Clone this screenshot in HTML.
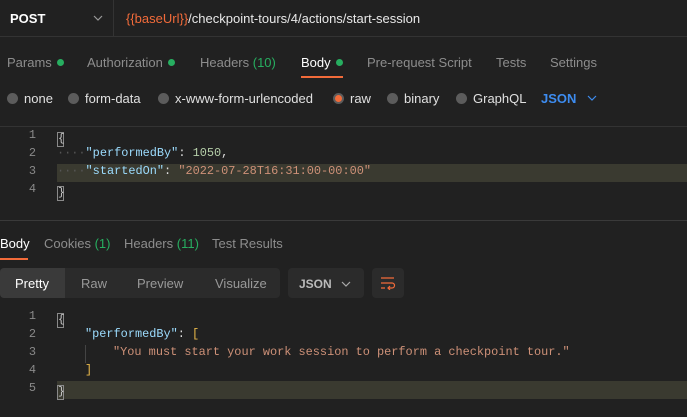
<!DOCTYPE html>
<html><head><style>
*{margin:0;padding:0;box-sizing:border-box}
body{width:687px;height:417px;background:#212121;font-family:"Liberation Sans",sans-serif;font-size:13px;color:#a6a6a6;position:relative;overflow:hidden}
.a{position:absolute;white-space:nowrap}
.dot{display:inline-block;width:7px;height:7px;border-radius:50%;background:#27ae60;margin-left:5px;vertical-align:1px}
.rad{display:inline-block;width:11px;height:11px;border-radius:50%;background:#5c5c5c;vertical-align:-1px;margin-right:6px}
.mono{font-family:"Liberation Mono",monospace;font-size:11.9px}
.ln{color:#8a8a8a;width:36px;text-align:right}
.k{color:#9cdcfe}.s{color:#ce9178}.n{color:#b5cea8}
.br{display:inline-block;width:7px;height:15px;border:1px solid #8a8a8a;vertical-align:-3px;color:#ccc;font-size:11px;line-height:13px}
</style></head><body>
<div class="a" style="left:0;top:0;width:687px;height:37px;border-bottom:1px solid #333"></div>
<div class="a" style="left:0;top:0;width:114px;height:37px;border-right:1px solid #333"></div>
<div class="a" style="left:10px;top:11px;color:#fff;font-weight:bold;font-size:13px">POST</div>
<svg class="a" style="left:93px;top:15px" width="10" height="7"><path d="M1 1l4 4 4-4" stroke="#999" fill="none" stroke-width="1.2"/></svg>
<div class="a" style="left:126px;top:11px;color:#e8e8e8;font-size:13px"><span style="color:#f26b3a">{{baseUrl}}</span>/checkpoint-tours/4/actions/start-session</div>

<div class="a" style="left:7px;top:55px;color:#8d8d8d">Params<span class="dot"></span></div>
<div class="a" style="left:87px;top:55px;color:#8d8d8d">Authorization<span class="dot"></span></div>
<div class="a" style="left:200px;top:55px;color:#8d8d8d">Headers <span style="color:#27ae60">(10)</span></div>
<div class="a" style="left:301px;top:55px;color:#fff">Body<span class="dot"></span></div>
<div class="a" style="left:301px;top:76px;width:42px;height:2px;background:#f26b3a"></div>
<div class="a" style="left:367px;top:55px;color:#8d8d8d">Pre-request Script</div>
<div class="a" style="left:496px;top:55px;color:#8d8d8d">Tests</div>
<div class="a" style="left:550px;top:55px;color:#8d8d8d">Settings</div>

<div class="a" style="left:7px;top:91px;color:#e0e0e0"><span class="rad"></span>none</div>
<div class="a" style="left:68px;top:91px;color:#e0e0e0"><span class="rad"></span>form-data</div>
<div class="a" style="left:158px;top:91px;color:#e0e0e0"><span class="rad"></span>x-www-form-urlencoded</div>
<div class="a" style="left:333px;top:91px;color:#e0e0e0"><span class="rad" style="background:#f26b3a;border:2px solid #5c5c5c"></span>raw</div>
<div class="a" style="left:387px;top:91px;color:#e0e0e0"><span class="rad"></span>binary</div>
<div class="a" style="left:456px;top:91px;color:#e0e0e0"><span class="rad"></span>GraphQL</div>
<div class="a" style="left:541px;top:91px;color:#3d8cf0;font-weight:bold">JSON</div>
<svg class="a" style="left:587px;top:95px" width="10" height="7"><path d="M1 1l4 4 4-4" stroke="#3d8cf0" fill="none" stroke-width="1.2"/></svg>

<div class="a" style="left:0;top:126px;width:687px;height:1px;background:#333"></div>
<div class="a" style="left:57px;top:164px;width:630px;height:18px;background:#3a3a30"></div>
<div class="a mono ln" style="left:0;top:128px">1</div>
<div class="a mono ln" style="left:0;top:146px">2</div>
<div class="a mono ln" style="left:0;top:164px">3</div>
<div class="a mono ln" style="left:0;top:182px">4</div>
<div class="a mono" style="left:57px;top:128px"><span class="br">{</span></div>
<div class="a mono" style="left:57px;top:146px"><span style="color:#555">····</span><span class="k">"performedBy"</span><span style="color:#ddd">: </span><span class="n">1050</span><span style="color:#ddd">,</span></div>
<div class="a mono" style="left:57px;top:164px"><span style="color:#555">····</span><span class="k">"startedOn"</span><span style="color:#ddd">: </span><span class="s">"2022-07-28T16:31:00-00:00"</span></div>
<div class="a mono" style="left:57px;top:182px"><span class="br">}</span></div>

<div class="a" style="left:0;top:220px;width:687px;height:1px;background:#3a3a3a"></div>
<div class="a" style="left:0;top:236px;color:#fff">Body</div>
<div class="a" style="left:0;top:258px;width:28px;height:2px;background:#f26b3a"></div>
<div class="a" style="left:44px;top:236px;color:#8d8d8d">Cookies <span style="color:#27ae60">(1)</span></div>
<div class="a" style="left:124px;top:236px;color:#8d8d8d">Headers <span style="color:#27ae60">(11)</span></div>
<div class="a" style="left:212px;top:236px;color:#8d8d8d">Test Results</div>

<div class="a" style="left:0;top:268px;width:280px;height:30px;background:#2b2b2b;border-radius:4px"></div>
<div class="a" style="left:0;top:268px;width:65px;height:30px;background:#3a3a3a;border-radius:4px 0 0 4px"></div>
<div class="a" style="left:15px;top:276px;color:#fff">Pretty</div>
<div class="a" style="left:81px;top:276px;color:#999">Raw</div>
<div class="a" style="left:137px;top:276px;color:#999">Preview</div>
<div class="a" style="left:215px;top:276px;color:#999">Visualize</div>
<div class="a" style="left:288px;top:268px;width:76px;height:30px;background:#2b2b2b;border-radius:4px"></div>
<div class="a" style="left:299px;top:277px;color:#bbb;font-weight:bold;font-size:12px">JSON</div>
<svg class="a" style="left:341px;top:281px" width="10" height="7"><path d="M1 1l4 4 4-4" stroke="#aaa" fill="none" stroke-width="1.2"/></svg>
<div class="a" style="left:372px;top:268px;width:32px;height:30px;background:#2b2b2b;border-radius:4px"></div>
<svg class="a" style="left:380px;top:276px" width="16" height="14"><path d="M1 2h13M1 7h11a2.5 2.5 0 0 1 0 5H8M10 10l-2 2 2 2M1 12h4" stroke="#f26b3a" fill="none" stroke-width="1.2"/></svg>

<div class="a" style="left:57px;top:381px;width:630px;height:18px;background:#3a3a30"></div>
<div class="a mono ln" style="left:0;top:309px">1</div>
<div class="a mono ln" style="left:0;top:327px">2</div>
<div class="a mono ln" style="left:0;top:345px">3</div>
<div class="a mono ln" style="left:0;top:363px">4</div>
<div class="a mono ln" style="left:0;top:381px">5</div>
<div class="a mono" style="left:57px;top:309px"><span class="br">{</span></div>
<div class="a mono" style="left:85px;top:327px"><span class="k">"performedBy"</span><span style="color:#ddd">: </span><span style="color:#e8b84a">[</span></div>
<div class="a" style="left:85px;top:345px;width:1px;height:18px;background:#444"></div>
<div class="a mono" style="left:113px;top:345px"><span class="s">"You must start your work session to perform a checkpoint tour."</span></div>
<div class="a mono" style="left:85px;top:363px;color:#e8b84a">]</div>
<div class="a mono" style="left:57px;top:381px"><span class="br">}</span></div>
</body></html>
